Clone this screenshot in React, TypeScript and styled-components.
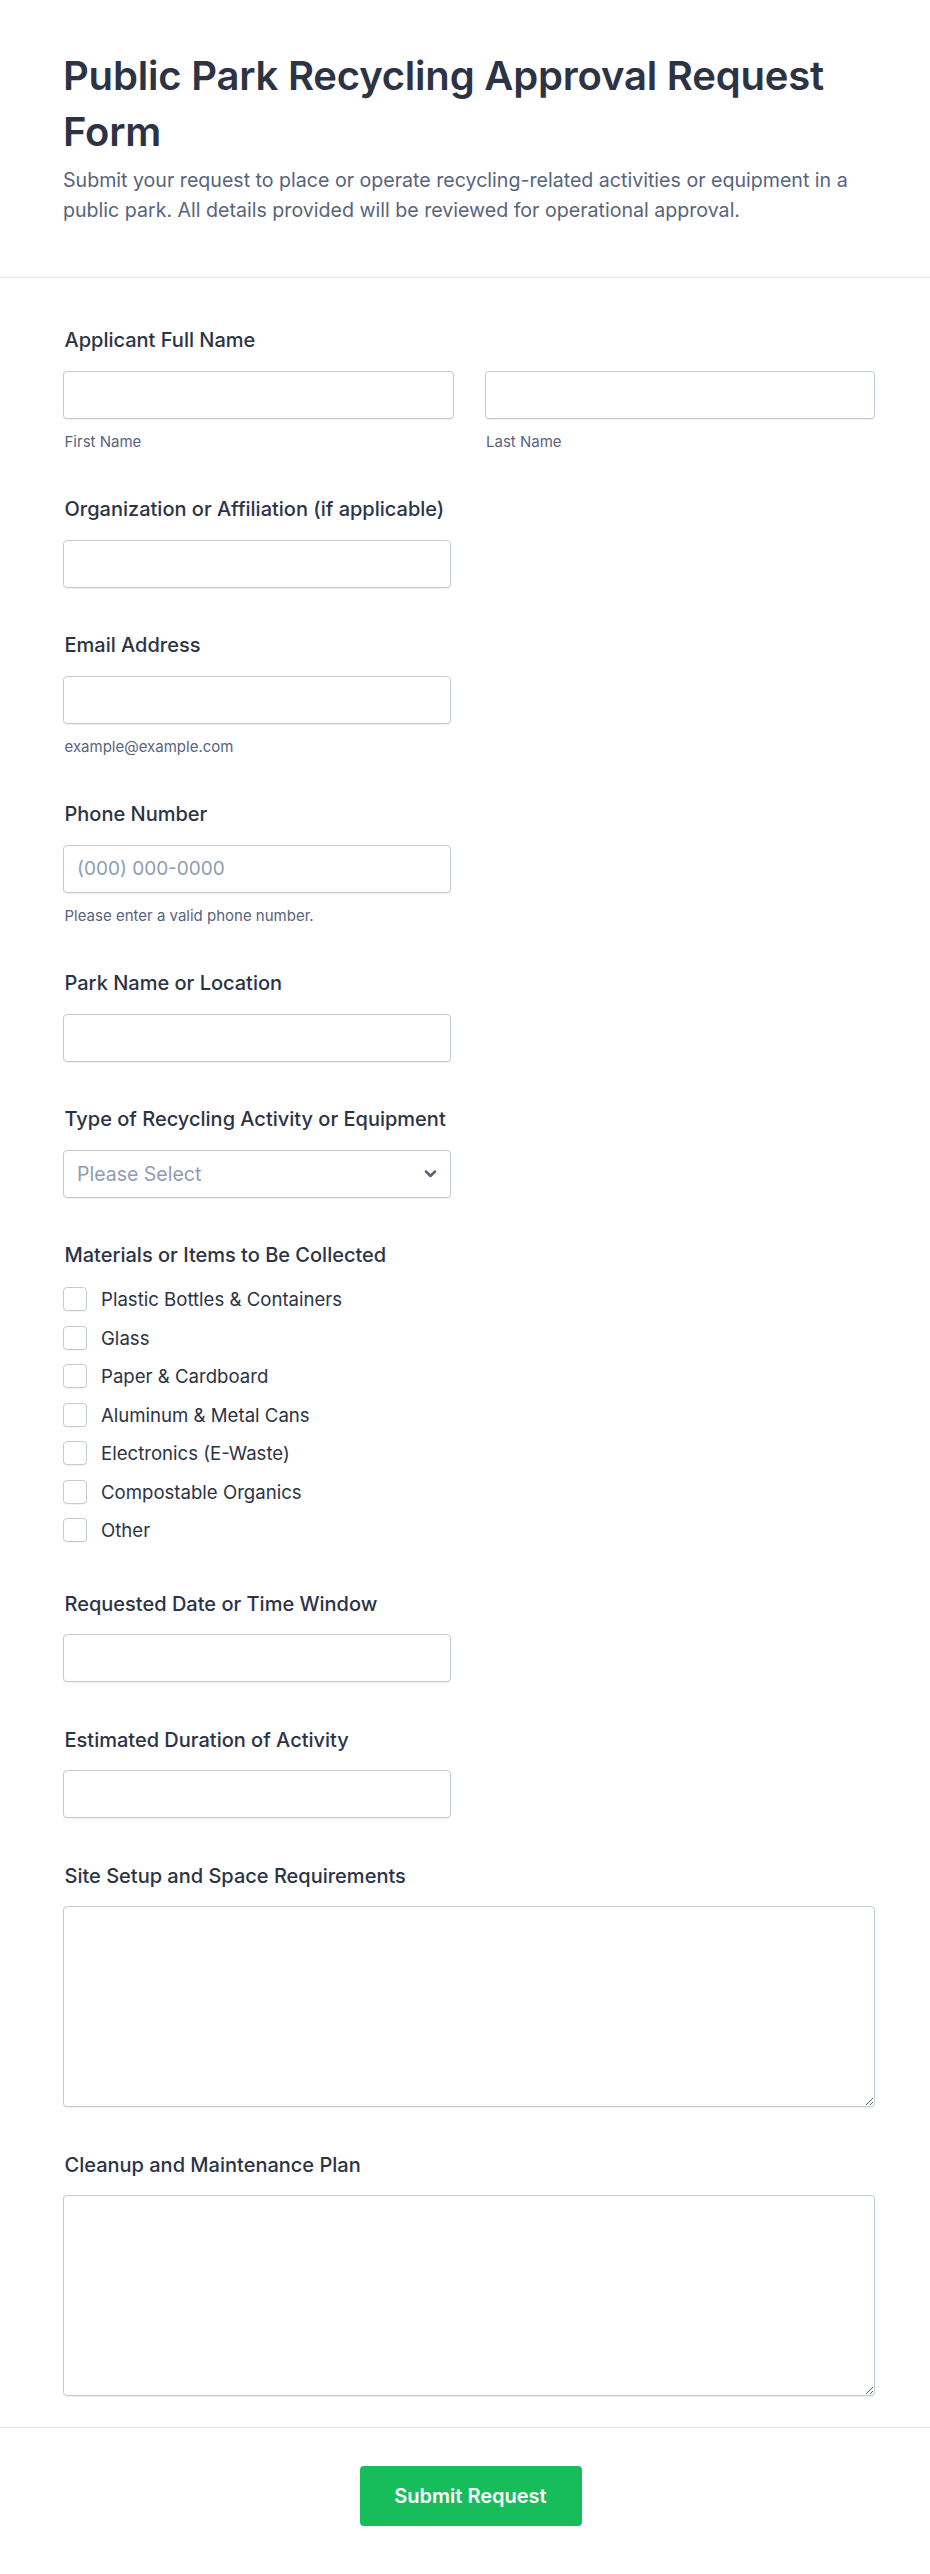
import React from 'react'
import styled, { createGlobalStyle } from 'styled-components'

const GlobalStyle = createGlobalStyle`
    * { box-sizing: border-box; }
    body {
        margin: 0;
        background: #FFFFFF;
        font-family: Inter, "Noto Sans", "Liberation Sans", sans-serif;
        color: #2C3345;
    }
`

const Page = styled.div`
    width: 930px;
    background: #FFFFFF;
`

const Header = styled.header`
    padding: 48px 55px 52px 63px;
    border-bottom: 1px solid #E3E6EC;
    > h1 {
        margin: 0;
        font-size: 40px;
        line-height: 56px;
        font-weight: 600;
        color: #2C3345;
        letter-spacing: -0.2px;
    }
    > p {
        margin: 5px 0 0 0;
        max-width: 800px;
        font-size: 19.6px;
        line-height: 30px;
        color: #57647E;
    }
`

const Body = styled.div`
    padding: 48px 55px 31px 63px;
`

const Field = styled.div`
    margin-bottom: 43.5px;
    &:last-child { margin-bottom: 0; }
`

const Label = styled.label`
    display: block;
    padding-left: 1.5px;
    font-size: 20px;
    line-height: 29px;
    font-weight: 500;
    color: #2C3345;
    margin-bottom: 15.5px;
`

const Row = styled.div`
    display: grid;
    grid-template-columns: 1fr 1fr;
    column-gap: 31px;
`

const Input = styled.input< { full?: boolean } >`
    display: block;
    width: ${ p => p.full ? '100%' : '388px' };
    height: 48px;
    border: 1px solid #C3CAD8;
    border-radius: 4px;
    box-shadow: 0 1px 1px rgba( 44, 51, 69, 0.08 );
    padding: 0 13px;
    font-family: inherit;
    font-size: 19px;
    color: #2C3345;
    background: #FFFFFF;
    outline: none;
    &::placeholder { color: #8D9DB4; }
`

const Sub = styled.div`
    margin-top: 13px;
    padding-left: 1.5px;
    font-size: 15px;
    line-height: 20px;
    color: #57647E;
`

const SelectWrap = styled.div`
    position: relative;
    width: 388px;
    > svg {
        position: absolute;
        right: 14px;
        top: 19px;
        pointer-events: none;
    }
`

const Select = styled.select`
    display: block;
    width: 100%;
    height: 48px;
    appearance: none;
    border: 1px solid #C3CAD8;
    border-radius: 4px;
    box-shadow: 0 1px 1px rgba( 44, 51, 69, 0.08 );
    padding: 0 13px;
    font-family: inherit;
    font-size: 19.5px;
    color: #8D9DB4;
    background: #FFFFFF;
    outline: none;
`

const CheckList = styled.div`
    display: flex;
    flex-direction: column;
    gap: 14.5px;
    padding: 1.5px 0 4px 0;
`

const CheckRow = styled.label`
    display: flex;
    align-items: center;
    height: 24px;
    gap: 14px;
    font-size: 18.6px;
    color: #2C3345;
    > span.box {
        width: 24px;
        height: 24px;
        border: 1px solid #C3CAD8;
        border-radius: 4px;
        background: #FFFFFF;
        box-shadow: 0 1px 1px rgba( 44, 51, 69, 0.06 );
        flex: none;
    }
`

const TextArea = styled.textarea`
    display: block;
    width: 100%;
    height: 201px;
    border: 1px solid #C3CAD8;
    border-radius: 4px;
    box-shadow: 0 1px 1px rgba( 44, 51, 69, 0.08 );
    padding: 12px 13px;
    font-family: inherit;
    font-size: 18px;
    resize: vertical;
    outline: none;
`

const Footer = styled.div`
    border-top: 1px solid #E3E6EC;
    padding: 37.5px 0 49px 11px;
    display: flex;
    justify-content: center;
`

const SubmitButton = styled.button`
    width: 222px;
    height: 60px;
    border: none;
    border-radius: 4px;
    background: #18BD5B;
    color: #FFFFFF;
    font-family: inherit;
    font-size: 20px;
    font-weight: 600;
    cursor: pointer;
`

const materials = [
    'Plastic Bottles & Containers',
    'Glass',
    'Paper & Cardboard',
    'Aluminum & Metal Cans',
    'Electronics (E-Waste)',
    'Compostable Organics',
    'Other',
]

const App = () => <Page>
    <GlobalStyle />
    <Header>
        <h1>Public Park Recycling Approval Request Form</h1>
        <p>Submit your request to place or operate recycling-related activities or equipment in a public park. All details provided will be reviewed for operational approval.</p>
    </Header>
    <Body>
        <Field>
            <Label>Applicant Full Name</Label>
            <Row>
                <div>
                    <Input full />
                    <Sub>First Name</Sub>
                </div>
                <div>
                    <Input full />
                    <Sub>Last Name</Sub>
                </div>
            </Row>
        </Field>
        <Field>
            <Label>Organization or Affiliation (if applicable)</Label>
            <Input />
        </Field>
        <Field>
            <Label>Email Address</Label>
            <Input type="email" />
            <Sub>example@example.com</Sub>
        </Field>
        <Field>
            <Label>Phone Number</Label>
            <Input placeholder="(000) 000-0000" />
            <Sub>Please enter a valid phone number.</Sub>
        </Field>
        <Field>
            <Label>Park Name or Location</Label>
            <Input />
        </Field>
        <Field>
            <Label>Type of Recycling Activity or Equipment</Label>
            <SelectWrap>
                <Select defaultValue="">
                    <option value="">Please Select</option>
                </Select>
                <svg width="13" height="10" viewBox="0 0 13 10">
                    <path d="M2 2.5 L6.5 7 L11 2.5" fill="none" stroke="#57647E" strokeWidth="2.5" strokeLinecap="round" strokeLinejoin="round" />
                </svg>
            </SelectWrap>
        </Field>
        <Field>
            <Label>Materials or Items to Be Collected</Label>
            <CheckList>
                { materials.map( m => <CheckRow key={ m }>
                    <span className="box" />
                    <span>{ m }</span>
                </CheckRow> ) }
            </CheckList>
        </Field>
        <Field>
            <Label>Requested Date or Time Window</Label>
            <Input />
        </Field>
        <Field>
            <Label>Estimated Duration of Activity</Label>
            <Input />
        </Field>
        <Field>
            <Label>Site Setup and Space Requirements</Label>
            <TextArea />
        </Field>
        <Field>
            <Label>Cleanup and Maintenance Plan</Label>
            <TextArea />
        </Field>
    </Body>
    <Footer>
        <SubmitButton>Submit Request</SubmitButton>
    </Footer>
</Page>

export default App
